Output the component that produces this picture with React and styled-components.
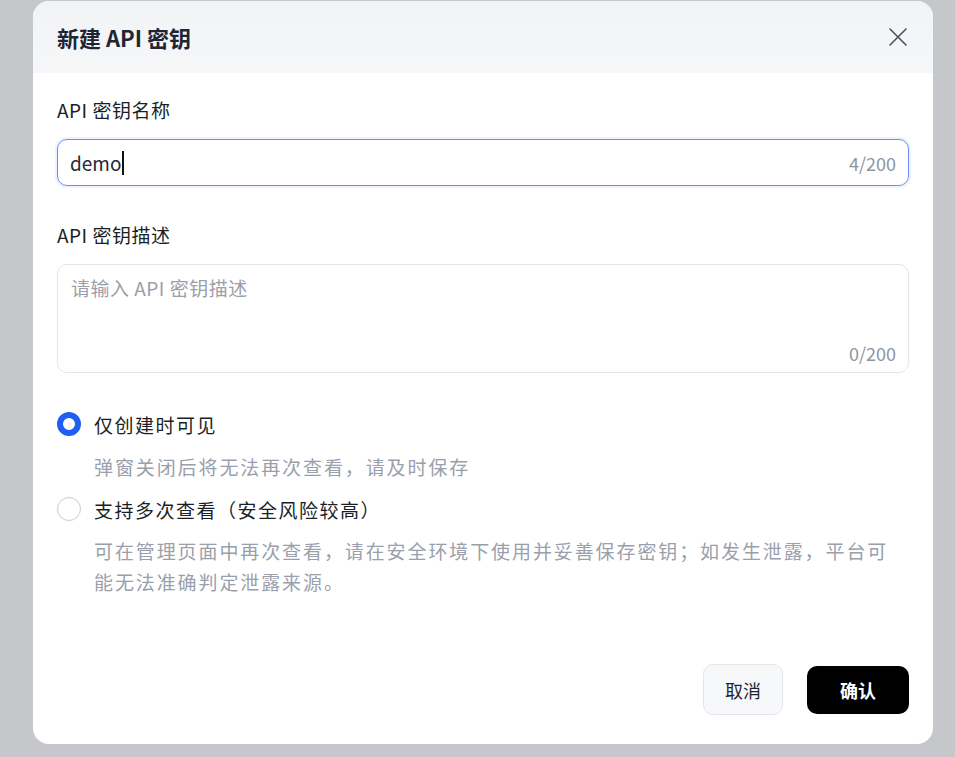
import React from "react";
import styled, { createGlobalStyle } from "styled-components";

const G = createGlobalStyle`
  html,body{margin:0;padding:0;background:#c6c7cb;}
  body{font-family:"Noto Sans CJK SC","Noto Sans",sans-serif;}
  *{box-sizing:border-box;}
`;
const Page = styled.div`width:955px;height:757px;padding:1px 0 0 33px;`;
const Modal = styled.div`width:900px;height:743px;background:#fff;border-radius:16px;overflow:hidden;display:flex;flex-direction:column;`;
const Header = styled.div`height:72px;flex:none;display:flex;align-items:center;justify-content:space-between;padding:0 24px;background:linear-gradient(180deg,#f1f3f6,#f6f7f9);`;
const Title = styled.div`font-size:22px;font-weight:700;color:#1f2633;`;
const Close = styled.button`border:0;background:none;padding:0;display:flex;cursor:pointer;`;
const Body = styled.div`padding:24px 24px 0;display:flex;flex-direction:column;flex:1;`;
const Label = styled.div`font-size:19px;color:#1b1f27;line-height:26px;margin-bottom:16px;letter-spacing:0.5px;`;
const Field = styled.div`position:relative;height:${p=>p.h}px;border:1px solid ${p=>p.focus?"#6f8ef5":"#e3e5ea"};border-radius:10px;box-shadow:${p=>p.focus?"0 0 0 2px #eef2fe":"none"};padding:${p=>p.focus?"0 12px":"9px 13px"};display:flex;align-items:${p=>p.focus?"center":"flex-start"};font-size:19px;margin-bottom:${p=>p.mb}px;`;
const Value = styled.span`color:#262a33;border-right:2px solid #111;padding-right:1px;line-height:24px;`;
const Placeholder = styled.span`color:#9aa0ab;letter-spacing:0.5px;`;
const Count = styled.span`position:absolute;right:12px;${p=>p.bottom?"bottom:6px;":"top:50%;transform:translateY(-50%);"}color:#8f95a0;font-size:18px;`;
const Option = styled.div`display:flex;align-items:center;gap:13px;font-size:19px;color:#1b1f27;height:30px;letter-spacing:1.5px;`;
const Radio = styled.span`width:24px;height:24px;border-radius:50%;flex:none;${p=>p.on?"border:6px solid #1f5ef0;":"border:1px solid #c9cbd3;"}`;
const Desc = styled.div`font-size:19px;color:#9aa0ab;line-height:31px;padding-left:37px;letter-spacing:1.9px;margin:${p=>p.m};`;
const Footer = styled.div`margin-top:auto;display:flex;justify-content:flex-end;gap:24px;align-items:center;padding-bottom:29px;`;
const Btn = styled.button`font-family:inherit;font-size:18px;border-radius:10px;cursor:pointer;
  ${p=>p.primary?"background:#000;color:#fff;border:0;width:102px;height:48px;font-weight:700;":"background:#f7f8fa;color:#1f2633;border:1px solid #e3e5ea;width:80px;height:51px;"}`;

export default function App(){
  return (<><G/><Page><Modal>
    <Header><Title>新建 API 密钥</Title>
      <Close><svg width="22" height="22" viewBox="0 0 22 22" stroke="#4b5160" strokeWidth="1.6" strokeLinecap="round"><path d="M3 3L19 19M19 3L3 19"/></svg></Close>
    </Header>
    <Body>
      <Label>API 密钥名称</Label>
      <Field h={47} mb={36} focus><Value>demo</Value><Count>4/200</Count></Field>
      <Label>API 密钥描述</Label>
      <Field h={109} mb={36}><Placeholder>请输入 API 密钥描述</Placeholder><Count bottom>0/200</Count></Field>
      <Option><Radio on/>仅创建时可见</Option>
      <Desc m="12px 0 12px">弹窗关闭后将无法再次查看，请及时保存</Desc>
      <Option><Radio/>支持多次查看（安全风险较高）</Option>
      <Desc m="11px 0 0">可在管理页面中再次查看，请在安全环境下使用并妥善保存密钥；如发生泄露，平台可能无法准确判定泄露来源。</Desc>
      <Footer><Btn>取消</Btn><Btn primary>确认</Btn></Footer>
    </Body>
  </Modal></Page></>);
}
